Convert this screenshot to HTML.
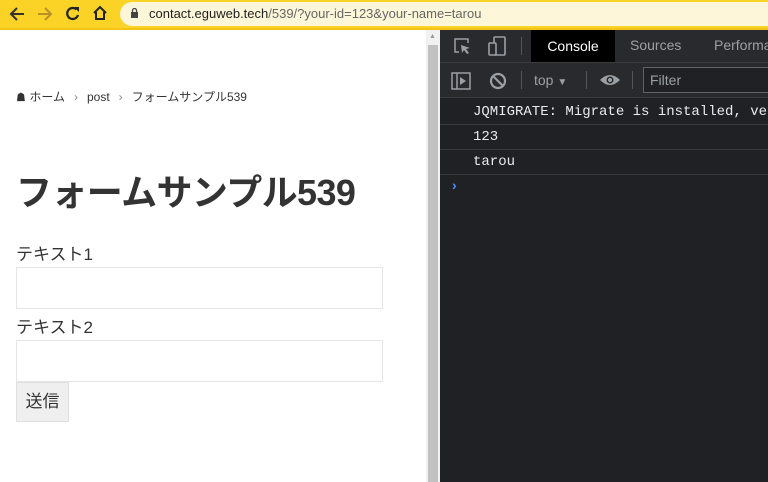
<!DOCTYPE html>
<html><head><meta charset="utf-8"><style>
html,body{margin:0;width:768px;height:482px;overflow:hidden}
body{position:relative;font-family:"Liberation Sans","Noto Sans CJK JP",sans-serif;background:#fff}
.a{position:absolute}
.mono{font-family:"Liberation Mono","DejaVu Sans Mono",monospace}
.s{color:#888;margin:0 9px}
</style></head><body>
<div class="a" style="left:0;top:0;width:768px;height:28px;background:#fbd226"></div>
<div class="a" style="left:0;top:28px;width:768px;height:2px;background:#f2c417"></div>
<svg class="a" style="left:9px;top:6px" width="16" height="16" viewBox="0 0 16 16"><path d="M15 8 H2 M8 2 L2 8 L8 14" fill="none" stroke="#333" stroke-width="2"/></svg>
<svg class="a" style="left:37px;top:6px" width="16" height="16" viewBox="0 0 16 16"><path d="M1 8 H14 M8 2 L14 8 L8 14" fill="none" stroke="#b8912a" stroke-width="2"/></svg>
<svg class="a" style="left:65px;top:6px" width="16" height="16" viewBox="0 0 16 16"><path d="M13 9 A5.5 5.5 0 1 1 11.5 3.5" fill="none" stroke="#222" stroke-width="2.2"/><path d="M9 1 H14 V6 Z" fill="#222"/></svg>
<svg class="a" style="left:92px;top:5px" width="16" height="16" viewBox="0 0 16 16"><path d="M2 8 L8 2 L14 8 M4 7 V14 H12 V7" fill="none" stroke="#222" stroke-width="2"/></svg>
<div class="a" style="left:120px;top:2px;width:660px;height:24px;border-radius:12px;background:#fdf6d8"></div>
<svg class="a" style="left:130px;top:8px" width="9" height="11"><rect x="1" y="4" width="7" height="6" fill="#444"/><path d="M2.5 4 V2.5 a2 2 0 0 1 4 0 V4" stroke="#444" fill="none" stroke-width="1.3"/></svg>
<div class="a" style="left:149px;top:6px;font-size:13px;color:#222;white-space:nowrap">contact.eguweb.tech<span style="color:#666">/539/?your-id=123&amp;your-name=tarou</span></div>

<div class="a" style="left:16px;top:88px;font-size:12px;color:#333;white-space:nowrap"><span style="font-size:10px">&#9751;</span> ホーム<span class="s">›</span>post<span class="s">›</span>フォームサンプル539</div>
<div class="a" style="left:16px;top:164px;font-size:36px;font-weight:bold;color:#333;white-space:nowrap;letter-spacing:-0.6px">フォームサンプル539</div>
<div class="a" style="left:16px;top:240px;font-size:17px;color:#333">テキスト1</div>
<div class="a" style="left:16px;top:267px;width:365px;height:40px;border:1px solid #e5e5e5"></div>
<div class="a" style="left:16px;top:313px;font-size:17px;color:#333">テキスト2</div>
<div class="a" style="left:16px;top:340px;width:365px;height:40px;border:1px solid #e5e5e5"></div>
<div class="a" style="left:16px;top:382px;width:53px;height:40px;background:#efefef;border:1px solid #e0e0e0;box-sizing:border-box;font-size:17px;color:#333;text-align:center;line-height:38px">送信</div>

<div class="a" style="left:426px;top:30px;width:14px;height:452px;background:#f1f1f1"></div>
<div class="a" style="left:428px;top:45px;width:10px;height:437px;background:#c1c1c1"></div>
<div class="a" style="left:429px;top:33px;font-size:7px;color:#999">▲</div>

<div class="a" style="left:440px;top:30px;width:328px;height:452px;background:#202124;overflow:hidden">
<div class="a" style="left:0;top:0;width:328px;height:32px;background:#292a2d;border-bottom:1px solid #3c3c3c"></div>
<svg class="a" style="left:12px;top:6px" width="20" height="20" viewBox="0 0 20 20"><path d="M7 16 H3 V3 H16 V7" fill="none" stroke="#9aa0a6" stroke-width="1.5"/><path d="M9 9 L18 12 L14 13 L17 17 L15 18 L12 14 L10 17 Z" fill="#9aa0a6"/></svg>
<svg class="a" style="left:46px;top:5px" width="22" height="22" viewBox="0 0 22 22"><rect x="8" y="2" width="11" height="18" rx="1" fill="none" stroke="#9aa0a6" stroke-width="1.6"/><rect x="3" y="8" width="7" height="12" rx="1" fill="#292a2d" stroke="#9aa0a6" stroke-width="1.6"/></svg>
<div class="a" style="left:81px;top:7px;width:1px;height:18px;background:#555"></div>
<div class="a" style="left:91px;top:0;width:84px;height:32px;background:#000;color:#fff;font-size:14px;text-align:center;line-height:32px">Console</div>
<div class="a" style="left:190px;top:7px;color:#9aa0a6;font-size:14px">Sources</div>
<div class="a" style="left:274px;top:7px;color:#9aa0a6;font-size:14px;white-space:nowrap">Performance</div>
<div class="a" style="left:0;top:33px;width:328px;height:34px;background:#292a2d;border-bottom:1px solid #3c3c3c"></div>
<svg class="a" style="left:11px;top:42px" width="20" height="18"><rect x="1" y="1" width="18" height="16" fill="none" stroke="#9aa0a6" stroke-width="1.5"/><line x1="6" y1="1" x2="6" y2="17" stroke="#9aa0a6" stroke-width="1.5"/><path d="M9 5 L15 9 L9 13 Z" fill="#9aa0a6"/></svg>
<svg class="a" style="left:49px;top:42px" width="18" height="18"><circle cx="9" cy="9" r="7" fill="none" stroke="#9aa0a6" stroke-width="2.2"/><line x1="4" y1="4" x2="14" y2="14" stroke="#9aa0a6" stroke-width="2.2"/></svg>
<div class="a" style="left:81px;top:41px;width:1px;height:18px;background:#555"></div>
<div class="a" style="left:94px;top:42px;color:#9aa0a6;font-size:14px">top <span style="font-size:10px">▼</span></div>
<div class="a" style="left:146px;top:41px;width:1px;height:18px;background:#555"></div>
<svg class="a" style="left:159px;top:43px" width="22" height="14"><path d="M1 7 Q11 -3 21 7 Q11 17 1 7 Z" fill="#9aa0a6"/><circle cx="11" cy="7" r="3.5" fill="#292a2d"/><circle cx="11" cy="7" r="2" fill="#9aa0a6"/></svg>
<div class="a" style="left:192px;top:41px;width:1px;height:18px;background:#555"></div>
<div class="a" style="left:203px;top:37px;width:130px;height:26px;border:1px solid #5f6368;box-sizing:border-box;background:#202124"></div>
<div class="a" style="left:210px;top:42px;color:#9aa0a6;font-size:14px">Filter</div>

<div class="a mono" style="left:33px;top:74px;color:#e8eaed;font-size:14px;white-space:nowrap">JQMIGRATE: Migrate is installed, version</div>
<div class="a" style="left:0;top:94px;width:328px;height:1px;background:#3a3a3a"></div>
<div class="a mono" style="left:33px;top:99px;color:#e8eaed;font-size:14px">123</div>
<div class="a" style="left:0;top:119px;width:328px;height:1px;background:#3a3a3a"></div>
<div class="a mono" style="left:33px;top:124px;color:#e8eaed;font-size:14px">tarou</div>
<div class="a" style="left:0;top:144px;width:328px;height:1px;background:#3a3a3a"></div>
<div class="a" style="left:12px;top:147px;color:#4d90fe;font-size:14px;font-weight:bold">›</div>
</div>
</body></html>
